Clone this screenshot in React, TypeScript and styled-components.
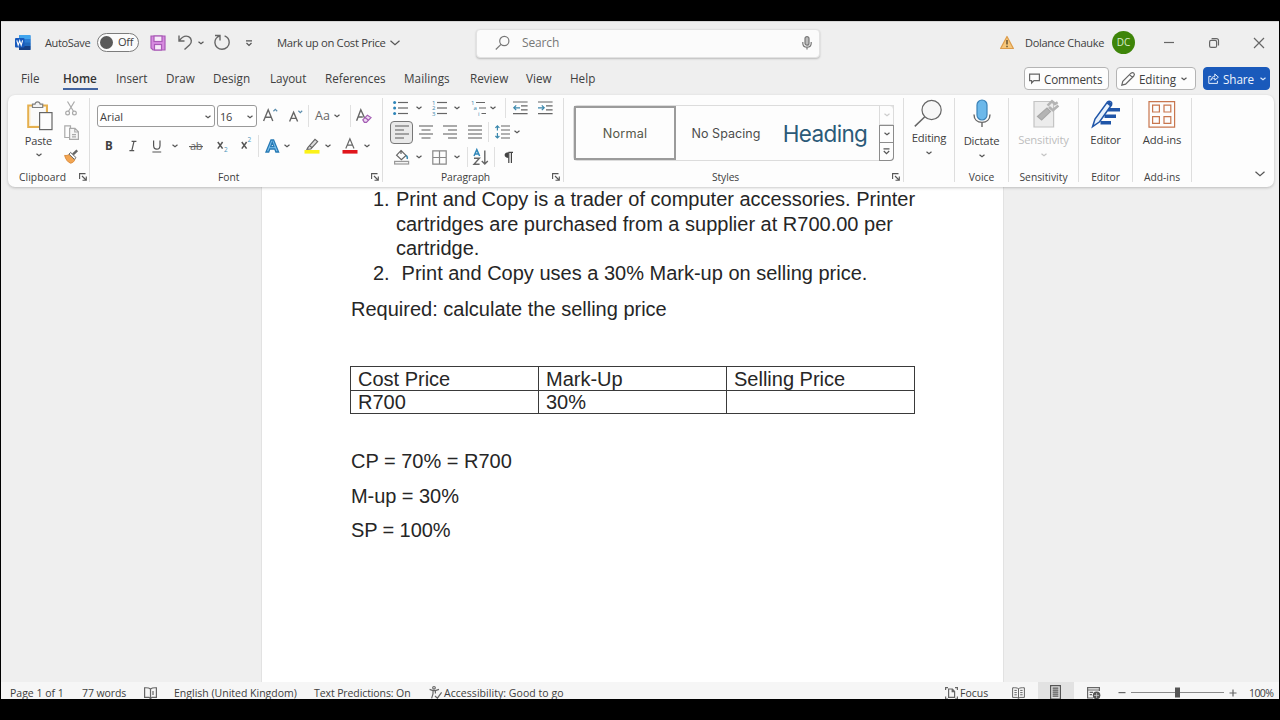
import React from "react";
import styled, { createGlobalStyle, css } from "styled-components";

const GlobalStyle = createGlobalStyle`
  * { box-sizing: border-box; }
  body { margin: 0; background: #000; }
`;

const ui = `"Open Sans", "Noto Sans", sans-serif`;

/* ---------- window shell ---------- */

const Screen = styled.div`
  width: 1280px;
  height: 720px;
  overflow: hidden;
  padding: 21px 1px;
  background: #000;
  font-family: ${ui};
  color: #444;
`;

const Window = styled.div`
  height: 678px;
  display: flex;
  flex-direction: column;
  background: #efefef;
  overflow: hidden;
`;

const TitleBar = styled.header`
  height: 43px;
  flex: none;
  display: flex;
  align-items: center;
  border-top: 1px solid #d6d6d6;
`;

const TabBar = styled.nav`
  height: 31px;
  flex: none;
  display: flex;
  align-items: center;
  padding-bottom: 2px;
`;

const Text = styled.span<{ $w?: number; $s?: number; $ls?: number; $ml?: number; $c?: string; $b?: number }>`
  flex: none;
  white-space: nowrap;
  line-height: 16px;
  width: ${(p) => (p.$w ? `${p.$w}px` : "auto")};
  margin-left: ${(p) => p.$ml ?? 0}px;
  font-size: ${(p) => p.$s ?? 11.5}px;
  letter-spacing: ${(p) => p.$ls ?? 0}px;
  color: ${(p) => p.$c ?? "#404040"};
  font-weight: ${(p) => p.$b ?? 400};
`;

const Glyph = styled.svg<{ $ml?: number }>`
  display: block;
  flex: none;
  overflow: visible;
  margin-left: ${(p) => p.$ml ?? 0}px;
  fill: none;
  stroke: #666;
  stroke-width: 1.2;
`;

type IconProps = { w: number; h: number; ml?: number; children: React.ReactNode };
const Icon = ({ w, h, ml, children }: IconProps) => (
  <Glyph width={w} height={h} viewBox={`0 0 ${w} ${h}`} $ml={ml}>
    {children}
  </Glyph>
);

const Chevron = ({ ml = 0, w = 6, color = "#555" }: { ml?: number; w?: number; color?: string }) => (
  <Icon w={w} h={w / 2 + 1} ml={ml}>
    <path d={`M0.5 0.7 L${w / 2} ${w / 2 - 0.3} L${w - 0.5} 0.7`} stroke={color} />
  </Icon>
);

/* ---------- title bar ---------- */

const Toggle = styled.div`
  flex: none;
  margin-left: 6px;
  width: 42px;
  height: 19px;
  margin-top: -2px;
  border: 1px solid #7c7c7c;
  border-radius: 10px;
  background: #fbfbfb;
  display: flex;
  align-items: center;
  padding-left: 2px;
`;

const Knob = styled.span`
  width: 13px;
  height: 13px;
  border-radius: 50%;
  background: #595959;
`;

const SearchBox = styled.div`
  flex: none;
  width: 344px;
  height: 29px;
  margin-left: 76px;
  border-radius: 4px;
  background: #fbfbfb;
  border: 1px solid #e2e2e2;
  box-shadow: 0 1px 2px rgba(0, 0, 0, 0.22);
  display: flex;
  align-items: center;
`;

const Avatar = styled.div`
  flex: none;
  width: 23px;
  height: 23px;
  margin: -1px 0 0 7px;
  border-radius: 50%;
  background: #3e8509;
  color: #d9ecc9;
  font-size: 10px;
  line-height: 23px;
  text-align: center;
`;

/* ---------- tabs ---------- */

const Tab = styled.div<{ $w: number; $ml: number; $active?: boolean }>`
  flex: none;
  height: 22px;
  width: ${(p) => p.$w}px;
  margin-left: ${(p) => p.$ml}px;
  border-bottom: 2px solid ${(p) => (p.$active ? "#41639f" : "transparent")};
  display: flex;
  align-items: flex-start;
  padding-top: 2px;
`;

const PillButton = styled.button<{ $w: number; $ml: number; $primary?: boolean }>`
  flex: none;
  display: flex;
  align-items: center;
  width: ${(p) => p.$w}px;
  height: 23px;
  margin: 0 0 0 ${(p) => p.$ml}px;
  padding: 0 0 0 4px;
  border: 1px solid ${(p) => (p.$primary ? "#1a5abb" : "#b4b4b4")};
  border-radius: 4px;
  background: ${(p) => (p.$primary ? "#1a5abb" : "#fdfdfd")};
  font-family: ${ui};
`;

/* ---------- ribbon ---------- */

const Ribbon = styled.section`
  position: relative;
  z-index: 1;
  flex: none;
  display: flex;
  width: 1266px;
  height: 92px;
  margin-left: 7px;
  border-radius: 7px;
  background: #fdfdfd;
  box-shadow: 0 1px 3px rgba(0, 0, 0, 0.22);
`;

const Group = styled.div<{ $w: number; $last?: boolean }>`
  flex: none;
  display: flex;
  flex-direction: column;
  width: ${(p) => p.$w}px;
  height: 84px;
  margin-top: 3px;
  border-right: ${(p) => (p.$last ? "none" : "1px solid #dedede")};
`;

const GroupBody = styled.div`
  height: 71px;
  flex: none;
  display: flex;
`;

const GroupFooter = styled.div`
  height: 16px;
  flex: none;
  display: flex;
  align-items: center;
`;

const Column = styled.div<{ $w?: number; $ml?: number; $pt?: number; $gap?: number }>`
  flex: none;
  display: flex;
  flex-direction: column;
  align-items: center;
  width: ${(p) => (p.$w ? `${p.$w}px` : "auto")};
  margin-left: ${(p) => p.$ml ?? 0}px;
  padding-top: ${(p) => p.$pt ?? 0}px;
  gap: ${(p) => p.$gap ?? 0}px;
`;

const Rows = styled.div`
  display: flex;
  flex-direction: column;
`;

const Row = styled.div<{ $h: number; $mt?: number }>`
  flex: none;
  display: flex;
  align-items: center;
  height: ${(p) => p.$h}px;
  margin-top: ${(p) => p.$mt ?? 0}px;
`;

const Rule = styled.i<{ $ml: number; $h?: number }>`
  flex: none;
  width: 1px;
  height: ${(p) => p.$h ?? 22}px;
  margin-left: ${(p) => p.$ml}px;
  background: #e0e0e0;
`;

const Combo = styled.div<{ $w: number; $ml: number }>`
  flex: none;
  display: flex;
  align-items: center;
  justify-content: space-between;
  width: ${(p) => p.$w}px;
  height: 22px;
  margin-left: ${(p) => p.$ml}px;
  padding: 1px 3px 0 2px;
  border: 1px solid #9a9a9a;
  border-radius: 3px;
  background: #fff;
`;

const Selected = styled.div`
  flex: none;
  width: 23px;
  height: 23px;
  margin-left: 7px;
  border: 1px solid #777;
  border-radius: 4px;
  background: #e9e9e9;
  display: flex;
  align-items: center;
  justify-content: center;
`;

const Gallery = styled.div`
  flex: none;
  display: flex;
  width: 321px;
  height: 56px;
  margin: 7px 0 0 9px;
  border: 1px solid #dcdcdc;
  border-radius: 4px;
`;

const StyleTile = styled.div<{ $w: number; $on?: boolean }>`
  flex: none;
  width: ${(p) => p.$w}px;
  display: flex;
  align-items: center;
  justify-content: center;
  font-family: Inter, sans-serif;
  ${(p) => p.$on && css`border: 2px solid #9b9b9b;`}
`;

const StyleName = styled.span<{ $s: number; $c: string; $ls: number }>`
  font-size: ${(p) => p.$s}px;
  color: ${(p) => p.$c};
  letter-spacing: ${(p) => p.$ls}px;
  white-space: nowrap;
`;

const Scroller = styled.div`
  flex: none;
  width: 15px;
  margin: -1px;
  display: flex;
  flex-direction: column;
`;

const ScrollStep = styled.div<{ $h: number; $dim?: boolean }>`
  flex: none;
  height: ${(p) => p.$h}px;
  border: 1px solid ${(p) => (p.$dim ? "#dcdcdc" : "#8c8c8c")};
  display: flex;
  align-items: center;
  justify-content: center;
  &:last-child { border-radius: 0 0 4px 0; border-top: none; }
`;

/* ---------- document ---------- */

const Canvas = styled.main`
  flex: none;
  height: 495px;
  padding-left: 260px;
  overflow: hidden;
`;

const Page = styled.article`
  width: 743px;
  height: 100%;
  padding: 0 89px;
  background: #fff;
  border: solid #e2e2e2;
  border-width: 0 1px;
  font-family: "Liberation Sans", Arial, sans-serif;
  font-size: 20px;
  color: #262626;
`;

const Items = styled.div`
  display: grid;
  grid-template-columns: 45px 1fr;
  grid-auto-rows: 24.6px;
  line-height: 24.6px;
  white-space: pre;
`;

const Marker = styled.span`
  padding-left: 22px;
`;

const Para = styled.p<{ $mt: number; $ls?: number }>`
  margin: ${(p) => p.$mt}px 0 0;
  line-height: 24px;
  letter-spacing: ${(p) => p.$ls ?? 0}px;
  white-space: nowrap;
`;

const Grid = styled.table`
  width: 565px;
  margin: 45px 0 0 -1px;
  border-collapse: collapse;
  table-layout: fixed;
  td {
    height: 24px;
    padding: 1px 0 0 7px;
    border: 1px solid #3a3a3a;
    line-height: 22px;
  }
  tr:last-child td {
    height: 23px;
    padding-top: 0;
  }
`;

/* ---------- status bar ---------- */

const StatusBar = styled.footer`
  flex: none;
  height: 17px;
  display: flex;
  align-items: center;
  padding-top: 4px;
  background: #f6f6f6;
`;

const ViewOn = styled.div`
  flex: none;
  width: 36px;
  height: 17px;
  margin: -4px 0 0 13px;
  padding: 3px 0 0 12px;
  background: #e2e2e2;
`;

const Launcher = ({ ml }: { ml: number }) => (
  <Icon w={8} h={8} ml={ml}>
    <path d="M0.6 6V0.6H6.5M3 3L7 7M7.3 3.5V7.3H3.5" stroke="#555" strokeWidth="1.1" />
  </Icon>
);

const lines = (rows: number[][]) => rows.map(([x1, x2, y], i) => <path key={i} d={`M${x1} ${y}H${x2}`} stroke="#666" strokeWidth="1.1" />);

const TitleRow = () => (
  <TitleBar>
    <Icon w={16} h={16} ml={14}>
      <rect x="4" y="0" width="11.5" height="15" rx="1" fill="#2b7cd3" stroke="none" />
      <path d="M4 4H15.5V7.5H4z" fill="#2b7cd3" stroke="none" />
      <path d="M4.5 0H15C15.3 0 15.5 0.3 15.5 1V4H4z" fill="#41a5ee" stroke="none" />
      <path d="M4 7.5H15.5V11H4z" fill="#2068bd" stroke="none" />
      <path d="M4 11H15.5V15H4z" fill="#153f85" stroke="none" />
      <rect x="0" y="3" width="9.5" height="9.5" rx="1" fill="#185abd" stroke="none" />
      <path d="M1.8 5.3L3.2 10.1L4.7 5.7L6.2 10.1L7.6 5.3" stroke="#fff" strokeWidth="1.1" />
    </Icon>
    <Text $ml={14} $w={46} $s={11} $ls={-0.35}>AutoSave</Text>
    <Toggle>
      <Knob />
      <Text $ml={5} $s={11} $ls={-0.2}>Off</Text>
    </Toggle>
    <Icon w={16} h={17} ml={11}>
      <path d="M1 1H15V15H3L1 13z" fill="#d78be0" stroke="#a95bb6" />
      <rect x="4" y="1" width="8" height="5.5" fill="#f7eaf9" stroke="#a95bb6" />
      <rect x="4.5" y="9.5" width="7" height="5.5" fill="#f7eaf9" stroke="#a95bb6" />
    </Icon>
    <Icon w={16} h={16} ml={12}>
      <path d="M1 0.5V6H6.5M1.2 5.8C4 2 7.5 0.3 10.6 1.7C14 3.5 14.2 7.5 11.5 10L6.5 14.5" stroke="#666" strokeWidth="1.4" />
    </Icon>
    <Chevron ml={4} />
    <Icon w={16} h={16} ml={10}>
      <path d="M1 0.5H6V5.5M5.8 0.9C2.5 2.1 0.8 4.5 0.9 7.7C1.2 11.7 4.4 14.3 8 14.3C12 14.3 15.2 11.3 15.2 7.5C15.2 4.5 13.4 2 10.6 0.9" stroke="#666" strokeWidth="1.4" />
    </Icon>
    <Icon w={8} h={7} ml={15}>
      <path d="M1 0.8H7M1.5 3L4 5.5L6.5 3" stroke="#555" />
    </Icon>
    <Text $ml={24} $w={110} $s={11.3} $ls={-0.34}>Mark up on Cost Price</Text>
    <Chevron ml={3} w={10} />
    <SearchBox>
      <Icon w={15} h={15} ml={18}>
        <circle cx="9.3" cy="5" r="4.6" stroke="#777" />
        <path d="M6 8.3L0.8 13.5" stroke="#777" />
      </Icon>
      <Text $ml={12} $w={40} $s={12} $ls={-0.15} $c="#777">Search</Text>
      <Icon w={10} h={14} ml={240}>
        <rect x="3" y="0.6" width="4" height="8.6" rx="2" fill="#bbb" stroke="#777" />
        <path d="M0.8 6V7.2C0.8 9.6 2.6 11.2 5 11.2C7.4 11.2 9.2 9.6 9.2 7.2V6M5 11.2V13.6" stroke="#777" />
      </Icon>
    </SearchBox>
    <Icon w={14} h={14} ml={180}>
      <path d="M7 0.5L13.4 12.5H0.6z" fill="#f6c77c" stroke="#dc9b4a" strokeLinejoin="round" />
      <path d="M7 4V8.5M7 9.7V11.3" stroke="#5c4a2c" strokeWidth="1.4" />
    </Icon>
    <Text $ml={11} $w={80} $s={11} $ls={-0.28}>Dolance Chauke</Text>
    <Avatar>DC</Avatar>
    <Icon w={10} h={10} ml={29}><path d="M0 4.5H10" /></Icon>
    <Icon w={10} h={10} ml={35}>
      <rect x="0.6" y="2.4" width="7" height="7" rx="1.5" />
      <path d="M2.6 0.6H7.4C8.8 0.6 9.5 1.3 9.5 2.6V7.4" />
    </Icon>
    <Icon w={10} h={10} ml={35}><path d="M0 0L10 10M10 0L0 10" /></Icon>
  </TitleBar>
);

const TabRow = () => (
  <TabBar>
    <Tab $ml={20} $w={20}><Text $s={11.7}>File</Text></Tab>
    <Tab $ml={22} $w={35} $active><Text $s={11.7} $b={600} $c="#333">Home</Text></Tab>
    <Tab $ml={18} $w={32}><Text $s={11.7}>Insert</Text></Tab>
    <Tab $ml={18} $w={30}><Text $s={11.7}>Draw</Text></Tab>
    <Tab $ml={17} $w={40}><Text $s={11.7}>Design</Text></Tab>
    <Tab $ml={17} $w={38}><Text $s={11.7} $ls={-0.1}>Layout</Text></Tab>
    <Tab $ml={17} $w={62}><Text $s={11.7}>References</Text></Tab>
    <Tab $ml={17} $w={48}><Text $s={11.7} $ls={0.1}>Mailings</Text></Tab>
    <Tab $ml={18} $w={40}><Text $s={11.7}>Review</Text></Tab>
    <Tab $ml={16} $w={28}><Text $s={11.7}>View</Text></Tab>
    <Tab $ml={16} $w={28}><Text $s={11.7}>Help</Text></Tab>
    <PillButton $ml={426} $w={85}>
      <Icon w={11} h={11}><path d="M0.6 1.2H10.4V7.6H5L2.6 10V7.6H0.6z" /></Icon>
      <Text $ml={4} $s={11.7} $ls={-0.15}>Comments</Text>
    </PillButton>
    <PillButton $ml={7} $w={80}>
      <Icon w={14} h={14}><path d="M0.8 13.2L1.8 9.4L10 1.2C11 0.4 12 0.4 12.8 1.2C13.6 2 13.6 3 12.8 4L4.6 12.2zM8.6 2.6L11.4 5.4" /></Icon>
      <Text $ml={3} $w={39} $s={11.7}>Editing</Text>
      <Chevron ml={4} />
    </PillButton>
    <PillButton $ml={7} $w={67} $primary>
      <Icon w={11} h={11}>
        <path d="M3.2 3.4H0.8V10.4H9.4V7.8M2.8 7.4C3 5 4.6 3.4 6.8 3.4V1L10.4 4.2L6.8 7.2V5.2C5 5.2 3.6 6 2.8 7.4z" stroke="#e4eefb" strokeWidth="1" />
      </Icon>
      <Text $ml={4} $w={31} $s={11.7} $ls={-0.1} $c="#eef4fd">Share</Text>
      <Chevron ml={6} color="#dce8fa" />
    </PillButton>
  </TabBar>
);

const ClipboardGroup = () => (
  <Group $w={82}>
    <GroupBody>
      <Column $w={33} $ml={14} $pt={3}>
        <Icon w={27} h={32} ml={4}>
          <path d="M1.2 4.5H20V26H1.2z" stroke="#e5b04f" strokeWidth="2" fill="#fbf3e2" />
          <rect x="4" y="6" width="14" height="18" fill="#fafafa" stroke="none" />
          <path d="M5.5 6.5V3.2H8C8.2 1.6 9.2 0.8 10.6 0.8C12 0.8 13 1.6 13.2 3.2H15.7V6.5z" fill="#f3f3f3" stroke="#808080" />
          <rect x="12.6" y="11.6" width="12.4" height="17" fill="#fdfdfd" stroke="#666" />
        </Icon>
        <Text $s={11} $ls={-0.15}>Paste</Text>
        <Row $h={12}><Chevron /></Row>
      </Column>
      <Column $w={16} $ml={8} $pt={3} $gap={9}>
        <Icon w={12} h={15}>
          <path d="M2.5 0.5L8.6 10.5M9.5 0.5L3.4 10.5" stroke="#aaa" />
          <circle cx="2.6" cy="12" r="1.9" stroke="#aaa" /><circle cx="9.4" cy="12" r="1.9" stroke="#aaa" />
        </Icon>
        <Icon w={15} h={15}>
          <path d="M5 12.5H0.8V0.8H6.5V3" stroke="#aaa" />
          <path d="M5.6 3.4H11L14.4 6.8V14.4H5.6zM10.8 3.4V7H14.4M8 9.6H12M8 11.8H12" stroke="#aaa" fill="#f6f6f6" />
        </Icon>
        <Icon w={15} h={15}>
          <path d="M0.6 6.4C2.6 6.8 4.2 6.2 5.4 5L11 10.2C10.4 12.4 8.8 13.8 6.6 14.2C3.8 13.2 1.6 10.4 0.6 6.4z" fill="#f2a552" stroke="#d98a3a" strokeWidth="0.9" />
          <path d="M5 5.2L6.6 3.4L12 8.6L10.4 10.4z" fill="#fafafa" stroke="#666" strokeWidth="1" />
          <path d="M9 5.4L13.2 1.4" stroke="#666" strokeWidth="2.4" />
        </Icon>
      </Column>
    </GroupBody>
    <GroupFooter>
      <Text $ml={11} $w={50} $s={10.3} $ls={0.05}>Clipboard</Text>
      <Launcher ml={10} />
    </GroupFooter>
  </Group>
);

const FontGroup = () => (
  <Group $w={293}>
    <GroupBody>
      <Rows>
        <Row $h={22} $mt={7}>
          <Combo $ml={7} $w={118}><Text $s={11}>Arial</Text><Chevron /></Combo>
          <Combo $ml={2} $w={40}><Text $s={11} $ls={-0.3}>16</Text><Chevron /></Combo>
          <Icon w={15} h={14} ml={6}>
            <path d="M0.6 12L5.2 0.8L9.8 12M2.3 8.2H8.1" strokeWidth="1.4" /><path d="M10.4 2.2L12.3 0.4L14.2 2.2" stroke="#5b8dad" />
          </Icon>
          <Icon w={14} h={12} ml={11}>
            <path d="M0.6 11.5L4.6 2.2L8.6 11.5M2 8.4H7.2" strokeWidth="1.4" /><path d="M9.4 0.8L11.3 2.6L13.2 0.8" stroke="#5b8dad" />
          </Icon>
          <Rule $ml={5} />
          <Text $ml={6} $w={17} $s={12.5} $c="#666">Aa</Text>
          <Chevron ml={2} />
          <Rule $ml={10} />
          <Icon w={16} h={15} ml={5}>
            <path d="M0.6 11.8L4.8 0.8L8.6 9M2 8H6.8" strokeWidth="1.4" />
            <path d="M6.8 10.8L11.4 6.2L15 8.6L10.4 13.4H8.4z" fill="#eed9f2" stroke="#a35cb3" /><path d="M9 8.6L12.5 11.3" stroke="#a35cb3" />
          </Icon>
        </Row>
        <Row $h={22} $mt={8}>
          <Text $ml={15} $w={9} $s={11.5} $b={700}>B</Text>
          <Icon w={8} h={11} ml={15}><path d="M2.6 0.3H7.4M0.4 9.7H5.2M5 0.3L2.8 9.7" stroke="#555" /></Icon>
          <Icon w={10} h={13} ml={15}><path d="M1.6 0.5V5.6C1.6 8 2.8 9.2 4.8 9.2C6.8 9.2 8 8 8 5.6V0.5M0.4 12H9.2" stroke="#555" /></Icon>
          <Chevron ml={10} />
          <Icon w={14} h={12} ml={11}>
            <text x="1" y="9.8" fontSize="11" fill="#666" stroke="none" letterSpacing="-0.4">ab</text><path d="M0 6.6H14" stroke="#555" strokeWidth="1" />
          </Icon>
          <Icon w={11} h={14} ml={14}>
            <path d="M0.8 3L5.6 9.6M5.6 3L0.8 9.6" stroke="#555" strokeWidth="1.5" /><text x="7" y="13" fontSize="6.5" fill="#4b95bb" stroke="none">2</text>
          </Icon>
          <Icon w={11} h={14} ml={13}>
            <path d="M0.8 3L5.6 9.6M5.6 3L0.8 9.6" stroke="#555" strokeWidth="1.5" /><text x="6.6" y="2.8" fontSize="6.5" fill="#4b95bb" stroke="none">2</text>
          </Icon>
          <Rule $ml={6} />
          <Icon w={15} h={14} ml={6}>
            <path d="M1 13L6 1H8.6L13.6 13H10.9L9.8 10H4.8L3.7 13zM5.7 7.6H8.9L7.3 3.4z" fill="#7cc2ee" stroke="#2779b4" strokeWidth="1.3" />
          </Icon>
          <Chevron ml={4} />
          <Icon w={16} h={16} ml={14}>
            <rect x="0.5" y="12" width="15" height="3.6" fill="#fbf219" stroke="none" />
            <path d="M4 9.4L11 1.4L13.6 3.6L6.8 11L3 11.4z" fill="#ddd" /><path d="M5.5 7.6L8.2 9.8" />
          </Icon>
          <Chevron ml={5} />
          <Icon w={16} h={16} ml={11}>
            <rect x="0.5" y="12" width="15" height="3.6" fill="#e0161c" stroke="none" />
            <path d="M3.8 10.4L7.9 0.8L12 10.4M5.3 7.2H10.6" />
          </Icon>
          <Chevron ml={6} />
        </Row>
      </Rows>
    </GroupBody>
    <GroupFooter>
      <Text $ml={128} $w={24} $s={10.3}>Font</Text>
      <Launcher ml={129} />
    </GroupFooter>
  </Group>
);

const ParagraphGroup = () => (
  <Group $w={181}>
    <GroupBody>
      <Rows>
        <Row $h={22} $mt={-1}>
          <Icon w={15} h={14} ml={10}>
            {[1.5, 7, 12.5].map((y) => <g key={y}><circle cx="1.6" cy={y} r="1.5" fill="#2d84b8" stroke="none" /><path d={`M5 ${y}H15`} /></g>)}
          </Icon>
          <Chevron ml={8} />
          <Icon w={15} h={14} ml={10}>
            {[1.5, 7, 12.5].map((y, i) => <g key={y}><text x="0" y={y + 2.2} fontSize="6" fill="#3b88ad" stroke="none">{i + 1}</text><path d={`M5 ${y}H15`} /></g>)}
          </Icon>
          <Chevron ml={7} />
          <Icon w={15} h={14} ml={11}>
            <text x="0" y="3.8" fontSize="6" fill="#3b88ad" stroke="none">1</text>
            <text x="2.6" y="9" fontSize="6" fill="#3b88ad" stroke="none">a</text>
            <text x="7" y="14.6" fontSize="6" fill="#3b88ad" stroke="none">i</text>
            <path d="M5 1.5H14M8 7H15M10.5 12.5H15" />
          </Icon>
          <Chevron ml={4} />
          <Rule $ml={9} $h={20} />
          <Icon w={15} h={14} ml={7}>
            <path d="M0 1H14.6M8 4.8H14.6M8 8.8H14.6M0 12.6H14.6" /><path d="M7 6.8H0.8M3.2 4.4L0.8 6.8L3.2 9.2" stroke="#3b88ad" />
          </Icon>
          <Icon w={15} h={14} ml={10}>
            <path d="M0 1H14.6M8 4.8H14.6M8 8.8H14.6M0 12.6H14.6" /><path d="M0 6.8H6.2M3.8 4.4L6.2 6.8L3.8 9.2" stroke="#3b88ad" />
          </Icon>
        </Row>
        <Row $h={24} $mt={1}>
          <Selected><Icon w={14} h={14}>{lines([[0, 14, 1], [0, 9, 5], [0, 14, 9], [0, 9, 13]])}</Icon></Selected>
          <Icon w={14} h={14} ml={6}>{lines([[0, 14, 1], [2.5, 11.5, 5], [0, 14, 9], [2.5, 11.5, 13]])}</Icon>
          <Icon w={14} h={14} ml={10}>{lines([[0, 14, 1], [5, 14, 5], [0, 14, 9], [5, 14, 13]])}</Icon>
          <Icon w={14} h={14} ml={11}>{lines([[0, 14, 1], [0, 14, 5], [0, 14, 9], [0, 14, 13]])}</Icon>
          <Rule $ml={6} $h={20} />
          <Icon w={15} h={14} ml={6}>
            <path d="M6 1H15M6 5H15M6 9H15M6 13H15" /><path d="M2.4 0.8V5.6M0.4 2.8L2.4 0.8L4.4 2.8M2.4 8V13M0.4 11L2.4 13L4.4 11" stroke="#3b88ad" />
          </Icon>
          <Chevron ml={4} />
        </Row>
        <Row $h={22} $mt={2}>
          <Icon w={16} h={16} ml={11}>
            <rect x="0.6" y="12.4" width="14" height="2.6" stroke="#999" fill="#f4f4f4" />
            <path d="M7 1.5L12 6.4L7.4 10.6L2.6 6.2zM7 1.5V5" /><path d="M12.2 6.2C13.4 7.4 13.6 8.6 13.2 10" stroke="#3b88ad" strokeWidth="1.6" />
          </Icon>
          <Chevron ml={6} />
          <Icon w={15} h={15} ml={10}><path d="M0.8 0.8H14.2V14.2H0.8zM7.5 0.8V14.2M0.8 7.5H14.2" stroke="#888" /></Icon>
          <Chevron ml={7} />
          <Rule $ml={7} $h={20} />
          <Icon w={16} h={16} ml={5}>
            <path d="M1 7L3.8 0.6L6.6 7M2 5H5.6" stroke="#2f86b8" strokeWidth="1.5" /><path d="M1 9.2H6.4L1 15.2H6.6M11.8 1.5V15M8.8 12L11.8 15L14.8 12" strokeWidth="1.4" />
          </Icon>
          <Rule $ml={5} $h={20} />
          <Icon w={9} h={11} ml={9}>
            <path d="M4.4 0.4H9M4.8 0.4V11M7.4 0.4V11" stroke="#444" /><path d="M4.6 0.2V6C2 6 0.6 4.8 0.6 3.1C0.6 1.4 2 0.2 4.6 0.2z" fill="#444" stroke="none" />
          </Icon>
        </Row>
      </Rows>
    </GroupBody>
    <GroupFooter>
      <Text $ml={58} $w={52} $s={10.3} $ls={-0.1}>Paragraph</Text>
      <Launcher ml={59} />
    </GroupFooter>
  </Group>
);

const StylesGroup = () => (
  <Group $w={340}>
    <GroupBody>
      <Gallery>
        <StyleTile $w={102} $on><StyleName $s={12.7} $c="#55584a" $ls={0.2}>Normal</StyleName></StyleTile>
        <StyleTile $w={100}><StyleName $s={12.5} $c="#4c4c4c" $ls={0.05}>No Spacing</StyleName></StyleTile>
        <StyleTile $w={98}><StyleName $s={22.5} $c="#2b5a78" $ls={-0.65}>Heading</StyleName></StyleTile>
        <StyleTile $w={6} />
        <Scroller>
          <ScrollStep $h={20} $dim><Chevron color="#ccc" /></ScrollStep>
          <ScrollStep $h={18}><Chevron /></ScrollStep>
          <ScrollStep $h={18}>
            <Icon w={7} h={7}><path d="M0.5 0.8H6.5M0.8 3L3.5 5.6L6.2 3" stroke="#555" /></Icon>
          </ScrollStep>
        </Scroller>
      </Gallery>
    </GroupBody>
    <GroupFooter>
      <Text $ml={148} $w={28} $s={10.3} $ls={-0.1}>Styles</Text>
      <Launcher ml={152} />
    </GroupFooter>
  </Group>
);

type BigProps = { w: number; pt: number; label: string; footer: string; dim?: boolean; chevron?: boolean; children: React.ReactNode };

const BigGroup = ({ w, pt, label, footer, dim, chevron, children }: BigProps) => (
  <Group $w={w}>
    <GroupBody>
      <Column $w={w - 1} $pt={pt}>
        {children}
        <Text $s={11.3} $ls={-0.2} $c={dim ? "#bdbdbd" : undefined}>{label}</Text>
        {chevron && <Row $h={13}><Chevron color={dim ? "#c4c4c4" : "#555"} /></Row>}
      </Column>
    </GroupBody>
    <Column $w={w - 1}><Text $s={10.3}>{footer}</Text></Column>
  </Group>
);

const RibbonBar = () => (
  <Ribbon>
    <ClipboardGroup />
    <FontGroup />
    <ParagraphGroup />
    <StylesGroup />
    <BigGroup w={51} pt={1} label="Editing" footer="" chevron>
      <Icon w={30} h={31}>
        <circle cx="17.6" cy="11" r="9.6" fill="#f7f7f7" /><path d="M10.6 18L0.8 27.4" strokeWidth="1.5" />
      </Icon>
    </BigGroup>
    <BigGroup w={54} pt={1} label="Dictate" footer="Voice" chevron>
      <Icon w={18} h={34}>
        <rect x="4" y="1" width="10" height="20" rx="5" fill="#6cb8ea" stroke="#3a82b8" />
        <path d="M1 15.5C1 20.5 4.4 23.4 9 23.4C13.6 23.4 17 20.5 17 15.5M9 23.4V28" strokeWidth="1.4" />
      </Icon>
    </BigGroup>
    <BigGroup w={70} pt={2} label="Sensitivity" footer="Sensitivity" dim chevron>
      <Icon w={22} h={32}>
        <path d="M1 1.5H20.6V27H1z" fill="#ececec" stroke="#c4c4c4" />
        <path d="M4.5 16.5L14 8L17.5 11.6L8.6 20z" fill="#b4b4b4" stroke="#a8a8a8" />
        <path d="M14.6 5.6L19 1.2L22 4L24.6 2.2M19.6 10.4L25.4 5.4M16 7L21 11" stroke="#b4b4b4" strokeWidth="2.6" />
      </Icon>
    </BigGroup>
    <BigGroup w={54} pt={2} label="Editor" footer="Editor">
      <Icon w={29} h={32}>
        <path d="M17 9.8H29M13.5 16.2H25M9.5 22.8H20" stroke="#1f55a8" strokeWidth="3.6" />
        <path d="M1.6 26.6L4 19L16.6 1.8C18.6 0.2 21.6 2.2 20.6 4.8L8.6 21.8z" fill="#e9f2fc" stroke="#1f55a8" strokeWidth="1.5" />
        <path d="M15.6 3.4L19.4 6.4L21 4.4L18.4 1z" fill="#1f55a8" stroke="none" />
      </Icon>
    </BigGroup>
    <BigGroup w={59} pt={2} label="Add-ins" footer="Add-ins">
      <Icon w={28} h={32}>
        <g stroke="#c8764e"><path d="M1 1.6H26.6V27.2H1z" />
          <path d="M4.6 5.2H11.4V12H4.6zM16 5.2H22.8V12H16zM4.6 16.6H11.4V23.4H4.6zM16 16.6H22.8V23.4H16z" /></g>
      </Icon>
    </BigGroup>
    <Group $w={80} $last>
      <Row $h={14} $mt={69}><Chevron ml={63} w={10} /></Row>
    </Group>
  </Ribbon>
);

const Document = () => (
  <Canvas>
    <Page>
      <Items>
        <Marker>1.</Marker><span>Print and Copy is a trader of computer accessories. Printer</span>
        <span /><span>cartridges are purchased from a supplier at R700.00 per</span>
        <span /><span>cartridge.</span>
        <Marker>2.</Marker><span>{" "}Print and Copy uses a 30% Mark-up on selling price.</span>
      </Items>
      <Para $mt={12}>Required: calculate the selling price</Para>
      <Grid>
        <tbody>
          <tr><td>Cost Price</td><td>Mark-Up</td><td>Selling Price</td></tr>
          <tr><td>R700</td><td>30%</td><td /></tr>
        </tbody>
      </Grid>
      <Para $mt={35}>CP = 70% = R700</Para>
      <Para $mt={10.5} $ls={-0.05}>M-up = 30%</Para>
      <Para $mt={10.5} $ls={-0.1}>SP = 100%</Para>
    </Page>
  </Canvas>
);

const Status = () => (
  <StatusBar>
    <Text $ml={9} $w={54} $s={10.5}>Page 1 of 1</Text>
    <Text $ml={18} $w={46} $s={10.5} $ls={-0.1}>77 words</Text>
    <Icon w={13} h={12} ml={16}>
      <path d="M6.5 2C5 0.8 3 0.6 0.6 0.8V10.4H5L6.5 11.6L8 10.4H12.4V0.8C10 0.6 8 0.8 6.5 2zM6.5 2V11" /><path d="M9 4V8" />
    </Icon>
    <Text $ml={17} $w={125} $s={10.5}>English (United Kingdom)</Text>
    <Text $ml={15} $w={98} $s={10.5} $ls={-0.1}>Text Predictions: On</Text>
    <Icon w={13} h={13} ml={17}>
      <circle cx="5" cy="1.8" r="1.3" /><path d="M0.6 3.4L4 4.6H6.4L10 3.4M4 4.6V8L2.6 12.4M6.4 4.6V7.6M6 10L8.4 12.2L12.6 6.4" />
    </Icon>
    <Text $ml={2} $w={122} $s={10.5} $ls={0.05}>Accessibility: Good to go</Text>
    <Icon w={13} h={12} ml={379}>
      <path d="M0.6 3V0.6H3M10 0.6H12.4V3M0.6 9.6V12H3M10 12H12.4V9.6M3.6 2H7.4L9.6 4.4V10.4H3.6zM7.2 2V4.6H9.6" />
    </Icon>
    <Text $ml={2} $w={30} $s={10.5}>Focus</Text>
    <Icon w={13} h={12} ml={22}>
      <path d="M6.5 1.6C5 0.8 3 0.6 0.6 0.8V10.4H5L6.5 11.4L8 10.4H12.4V0.8C10 0.6 8 0.8 6.5 1.6zM6.5 1.6V11M2.4 3.4H4.8M2.4 5.6H4.8M2.4 7.8H4.8M8.2 3.4H10.6M8.2 5.6H10.6M8.2 7.8H10.6" strokeWidth="1" />
    </Icon>
    <ViewOn>
      <Icon w={11} h={14}><path d="M0.6 0.6H10.4V14H0.6zM2.6 3.2H8.4M2.6 5.2H8.4M2.6 7.2H8.4M2.6 9.2H8.4M2.6 11.2H8.4" stroke="#555" /></Icon>
    </ViewOn>
    <Icon w={14} h={12} ml={13}>
      <path d="M6 11H0.6V0.6H12.4V4M0.6 3H12.4M2.6 5.4H6M2.6 7.6H5" /><circle cx="9.6" cy="8.4" r="3.8" fill="#555" stroke="none" /><path d="M7 8.4H12M9.6 6V11" stroke="#ddd" strokeWidth="0.7" />
    </Icon>
    <Icon w={8} h={8} ml={17}><path d="M0.5 3.6H7.5" /></Icon>
    <Icon w={93} h={11} ml={5}>
      <path d="M0 5.5H93" stroke="#8a8a8a" /><rect x="44" y="0.5" width="5" height="10" fill="#555" stroke="none" />
    </Icon>
    <Icon w={8} h={8} ml={5}><path d="M0.5 4H7.5M4 0.5V7.5" /></Icon>
    <Text $ml={12} $w={26} $s={10.5} $ls={-0.6}>100%</Text>
  </StatusBar>
);

export default function App() {
  return (
    <Screen>
      <GlobalStyle />
      <Window>
        <TitleRow />
        <TabRow />
        <RibbonBar />
        <Document />
        <Status />
      </Window>
    </Screen>
  );
}
